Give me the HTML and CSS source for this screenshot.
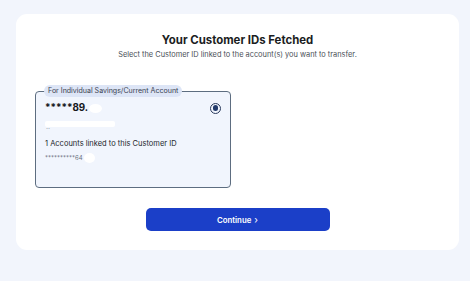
FILE: index.html
```html
<!DOCTYPE html>
<html>
<head>
<meta charset="utf-8">
<link rel="stylesheet" href="styles.css">
</head>
<body>
<div class="page">
  <div class="card">
    <h1 class="title">Your Customer IDs Fetched</h1>
    <p class="subtitle">Select the Customer ID linked to the account(s) you want to transfer.</p>
    <div class="account">
      <span class="legend">For Individual Savings/Current Account</span>
      <div class="row">
        <div class="id">*****89.<span class="blob"></span></div>
        <span class="radio"><span class="dot"></span></span>
      </div>
      <div class="name"><span class="dots">..</span><span class="bar"></span></div>
      <div class="linked">1 Accounts linked to this Customer ID</div>
      <div class="acc">**********64<span class="blob small"></span></div>
    </div>
    <button class="cta">Continue <span class="chev">&#x203A;</span></button>
  </div>
</div>
</body>
</html>
```
FILE: styles.css
```css
html, body {
  margin: 0;
  padding: 0;
  background: #ffffff;
  font-family: Inter, "Noto Sans", sans-serif;
}
.page {
  width: 470px;
  height: 281px;
  box-sizing: border-box;
  background: #f2f5fc;
  padding: 14px 11px 0 16px;
}
.card {
  width: 443px;
  height: 236px;
  box-sizing: border-box;
  background: #ffffff;
  border-radius: 11px;
  display: flex;
  flex-direction: column;
  align-items: center;
  padding-top: 19px;
}
.title {
  margin: 0;
  font-size: 11.4px;
  line-height: 15px;
  font-weight: 700;
  color: #1b1d22;
}
.subtitle {
  margin: 2px 0 0;
  font-size: 7.4px;
  line-height: 10px;
  color: #4a4f57;
}
.account {
  align-self: flex-start;
  margin: 31px 0 0 19px;
  position: relative;
  width: 196px;
  height: 97px;
  box-sizing: border-box;
  border: 1px solid #5d6d80;
  border-radius: 4px;
  background: #f1f5fd;
  padding: 10px 9px 0 9px;
}
.legend {
  position: absolute;
  left: 8px;
  top: -7px;
  background: #dde5f6;
  border-radius: 6px;
  padding: 0 4px;
  font-size: 7.05px;
  line-height: 12px;
  color: #3a4250;
  white-space: nowrap;
}
.row {
  display: flex;
  justify-content: space-between;
  align-items: center;
}
.id {
  font-size: 9.8px;
  line-height: 12px;
  font-weight: 700;
  color: #16181c;
  display: flex;
  align-items: center;
}
.blob {
  display: inline-block;
  width: 13px;
  height: 9px;
  background: #ffffff;
  border-radius: 50%;
  margin-left: 1px;
}
.blob.small {
  width: 11px;
  height: 10px;
}
.radio {
  width: 11px;
  height: 11px;
  box-sizing: border-box;
  border: 1.3px solid #2a3a5c;
  border-radius: 50%;
  display: flex;
  align-items: center;
  justify-content: center;
  margin-right: 0;
}
.dot {
  width: 5.5px;
  height: 5.5px;
  border-radius: 50%;
  background: #223a6b;
}
.name {
  margin-top: 7px;
  height: 9px;
  position: relative;
  width: 70px;
}
.bar {
  position: absolute;
  left: 0;
  top: 0;
  width: 70px;
  height: 6px;
  background: #ffffff;
  border-radius: 2px;
}
.dots {
  position: absolute;
  left: 1px;
  top: 2px;
  font-size: 7px;
  line-height: 7px;
  color: #9aa2ae;
  z-index: 1;
}
.linked {
  margin-top: 9px;
  font-size: 7.5px;
  line-height: 10px;
  color: #22252b;
}
.acc {
  margin-top: 4px;
  font-size: 6px;
  line-height: 10px;
  color: #6b7280;
  display: flex;
  align-items: center;
}
.cta {
  margin-top: 20px;
  width: 184px;
  height: 23px;
  border: none;
  border-radius: 5px;
  background: #1b3fc8;
  color: #ffffff;
  font-family: Inter, "Noto Sans", sans-serif;
  font-size: 7.8px;
  font-weight: 600;
  display: flex;
  align-items: center;
  justify-content: center;
  gap: 3px;
  padding: 0;
}
.chev {
  font-size: 9.5px;
  font-weight: 400;
  line-height: 10px;
}
```
